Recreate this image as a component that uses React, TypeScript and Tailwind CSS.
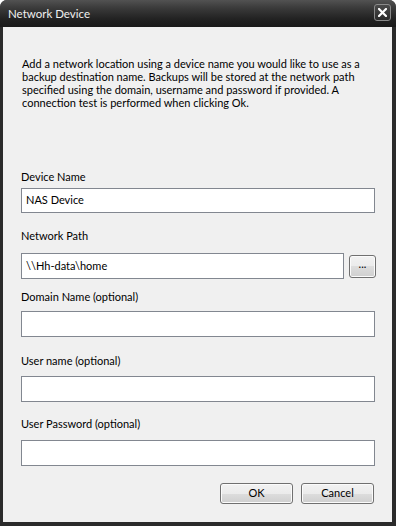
import React from "react";

const font = { fontFamily: 'Lato, "Liberation Sans", Arial, sans-serif' };

function Field({ value, className }: { value?: string; className: string }) {
  return (
    <div className={`flex items-center border border-[#828790] bg-white pl-[4px] text-[11px] text-black ${className}`}>
      {value}
    </div>
  );
}

function Btn({ label, className }: { label: string; className: string }) {
  return (
    <div
      className={`flex items-center justify-center rounded-[3px] border border-[#707070] bg-[linear-gradient(#f2f2f2,#ebebeb_50%,#dddddd_50%,#cfcfcf)] shadow-[inset_0_0_0_1px_#fbfbfb] text-[11px] text-black ${className}`}
    >
      {label}
    </div>
  );
}

export default function App() {
  return (
    <div
      className="flex h-[526px] w-[396px] flex-col rounded-t-[7px] bg-[#2b2b2b]"
      style={font}
    >
      <div className="flex h-[27px] items-center justify-between rounded-t-[7px] bg-[linear-gradient(#525252,#3a3a3a_30%,#222222_70%,#1a1a1a)] pl-[8px] pr-[5px]">
        <span className="text-[11.5px] leading-none text-[#f0f0f0]">Network Device</span>
        <div className="mb-[2px] flex h-[17px] w-[17px] items-center justify-center rounded-[3px] border border-[#8a8a8a] bg-[linear-gradient(#4a4a4a,#2a2a2a)]">
          <svg width="9" height="9" viewBox="0 0 9 9">
            <path d="M1 1 L8 8 M8 1 L1 8" stroke="#ffffff" strokeWidth="2.2" strokeLinecap="square" />
          </svg>
        </div>
      </div>
      <div className="ml-[3px] mr-[4px] mb-[4px] flex flex-1 flex-col bg-[#f0f0f0] pl-[18px] pr-[17px] pt-[30px] text-[11px] text-black">
        <p className="whitespace-nowrap pl-[1px] leading-[13px]">
          Add a network location using a device name you would like to use as a
          <br />
          backup destination name. Backups will be stored at the network path
          <br />
          specified using the domain, username and password if provided. A
          <br />
          connection test is performed when clicking Ok.
        </p>
        <div className="mt-[61px] h-[14px] leading-[14px]">Device Name</div>
        <Field value="NAS Device" className="mt-[4px] h-[25px]" />
        <div className="mt-[16px] h-[14px] leading-[14px]">Network Path</div>
        <div className="mt-[10px] flex h-[26px] items-center gap-[5px]">
          <Field value="\\Hh-data\home" className="h-[26px] flex-1" />
          <Btn label="..." className="mr-[-1px] h-[23px] w-[27px] pb-[4px]" />
        </div>
        <div className="mt-[11px] h-[14px] leading-[14px]">Domain Name (optional)</div>
        <Field className="mt-[7px] h-[26px]" />
        <div className="mt-[17px] h-[14px] leading-[14px]">User name (optional)</div>
        <Field className="mt-[8px] h-[26px]" />
        <div className="mt-[15px] h-[14px] leading-[14px]">User Password (optional)</div>
        <Field className="mt-[9px] h-[26px]" />
        <div className="mt-[17px] flex justify-end gap-[8px] pr-[1px]">
          <Btn label="OK" className="h-[21px] w-[73px]" />
          <Btn label="Cancel" className="h-[21px] w-[73px]" />
        </div>
      </div>
    </div>
  );
}
